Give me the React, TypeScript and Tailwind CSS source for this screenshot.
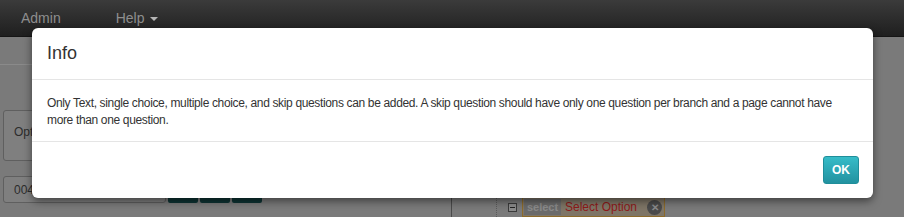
import React from 'react';

const font = { fontFamily: '"Liberation Sans", Arial, sans-serif' };

const NavBar: React.FC = () => (
  <div className="h-[37px] bg-gradient-to-b from-[#3b3b3b] to-[#1f1f1f] border-b border-[#151515] flex items-center text-[14px] text-[#8e8e8e]">
    <span className="ml-[21px]">Admin</span>
    <span className="ml-[55px] flex items-center">
      Help
      <span className="ml-[6px] mt-[1px] w-0 h-0 border-x-[4px] border-x-transparent border-t-[4px] border-t-[#b5b5b5]" />
    </span>
  </div>
);

const PageBehind: React.FC = () => (
  <div className="flex-1 bg-[#7a7a7a] flex">
    <div className="w-[452px] border-r border-[#4a4a4a] flex flex-col">
      <div className="h-[28px] border-b border-[#8a8a8a]" />
      <div className="pl-[3px] pt-[45px]">
        <div className="w-[163px] h-[51px] border border-[#5f5f5f] rounded-[3px] bg-[#7f7f7f] px-[10px] pt-[12px] text-[12px] text-[#2c2c2c]">
          Option
        </div>
        <div className="flex items-end mt-[15px] gap-[2px]">
          <div className="w-[163px] h-[27px] border border-[#5f5f5f] rounded-[3px] bg-[#7f7f7f] px-[10px] flex items-center text-[12px] text-[#2c2c2c]">
            004
          </div>
          <div className="w-[30px] h-[20px] bg-[#0e3434] rounded-[2px]" />
          <div className="w-[30px] h-[20px] bg-[#0e3434] rounded-[2px]" />
          <div className="w-[30px] h-[20px] bg-[#0e3434] rounded-[2px]" />
        </div>
      </div>
    </div>
    <div className="flex-1 relative">
      <div className="absolute left-[44px] top-[150px] h-[30px] border-l border-dotted border-[#5a5a5a]" />
      <div className="absolute left-[56px] top-[160px] flex items-center gap-[5px]">
        <span className="w-[9px] h-[9px] border border-[#3a3a3a] bg-[#8a8a8a] flex items-center justify-center">
          <span className="w-[5px] h-[1px] bg-[#222]" />
        </span>
        <div className="flex items-center h-[20px] w-[143px] border border-[#8c6a2a] bg-[#7e7566] pl-[1px]">
          <span className="bg-[#6a6a6a] text-[#8a8a8a] font-bold text-[11px] w-[37px] h-[16px] flex items-center justify-center">select</span>
          <span className="ml-[4px] text-[#8e1a1a] text-[12px] whitespace-nowrap">Select Option</span>
          <span className="ml-auto mr-[2px] w-[15px] h-[15px] rounded-full bg-[#4a4a4a] text-[#8a8a8a] text-[10px] font-bold flex items-center justify-center">✕</span>
        </div>
      </div>
    </div>
  </div>
);

const InfoModal: React.FC = () => (
  <div className="absolute left-[32px] top-[28px] w-[841px] bg-white rounded-[6px] shadow-[0_3px_9px_rgba(0,0,0,0.5)]">
    <div className="px-[15px] pt-[14px] pb-[15px] border-b border-[#e5e5e5]">
      <h4 className="text-[18px] leading-[22px] text-[#333]">Info</h4>
    </div>
    <div className="px-[15px] pt-[15px] pb-[12px] text-[12px] tracking-[-0.35px] leading-[17px] text-[#333]">
      <p className="w-[795px]">
        Only Text, single choice, multiple choice, and skip questions can be added. A skip question should have only one question per branch and a page cannot have more than one question.
      </p>
    </div>
    <div className="flex justify-end px-[14px] py-[14px] border-t border-[#e5e5e5]">
      <button className="h-[28px] w-[36px] rounded-[3px] border border-[#1f8e9a] bg-gradient-to-b from-[#36bcc8] to-[#2292a0] text-white text-[12px] font-bold">
        OK
      </button>
    </div>
  </div>
);

const App: React.FC = () => {
  return (
    <div className="relative w-[904px] h-[217px] overflow-hidden flex flex-col" style={font}>
      <NavBar />
      <PageBehind />
      <InfoModal />
    </div>
  );
};

export default App;
